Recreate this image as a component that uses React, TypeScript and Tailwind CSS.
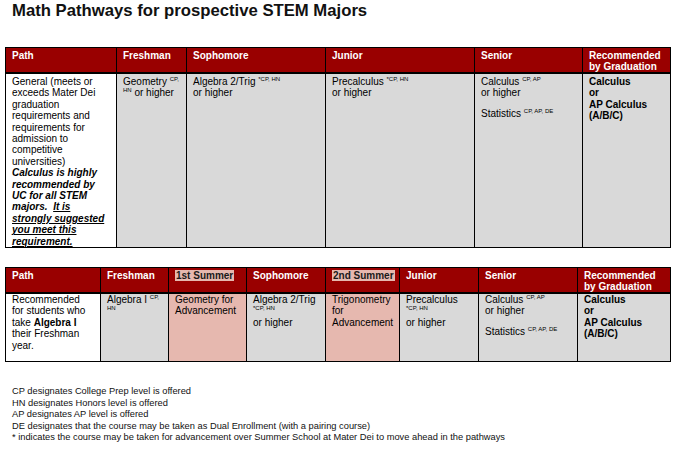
import React from "react";

// Small raised marker for course levels (CP, HN, AP, DE).
function Lv({ children }: { children: React.ReactNode }) {
  return <span className="relative top-[-4px] text-[6px] leading-none">{children}</span>;
}

const head = "bg-[#990000] border-b border-black px-[6px] pt-[2px] text-[10px] leading-[11px] font-bold text-white whitespace-nowrap";
const cell = "px-[6px] text-[10px] leading-[11.4px] text-black whitespace-nowrap";
const gray = "bg-[#d9d9d9]";
const pink = "bg-[#e6b8af]";

function Summer({ children }: { children: React.ReactNode }) {
  return <span className="bg-[#e6b8af] px-px text-[#1a1a1a]">{children}</span>;
}

function Senior() {
  return (
    <>
      <div>
        Calculus <Lv>CP, AP</Lv>
        <br />
        or higher
      </div>
      <div className="mt-[9px]">
        Statistics <Lv>CP, AP, DE</Lv>
      </div>
    </>
  );
}

function Recommended() {
  return (
    <div className="font-bold">
      Calculus
      <br />
      or
      <br />
      AP Calculus
      <br />
      (A/B/C)
    </div>
  );
}

export default function App() {
  return (
    <div
      className="relative h-[449px] w-[677px] overflow-hidden bg-white pl-[5px]"
      style={{ fontFamily: '"Liberation Sans", Arial, sans-serif' }}
    >
      <h1 className="ml-[7px] text-[16.7px] font-bold leading-[22px] text-[#111]">
        Math Pathways for prospective STEM Majors
      </h1>

      {/* Standard pathway */}
      <div className="mt-[25px] grid w-[666px] grid-cols-[110px_69px_138px_148px_107px_87px] grid-rows-[25px_173px] gap-px border border-black bg-black">
        <div className={head}>Path</div>
        <div className={head}>Freshman</div>
        <div className={head}>Sophomore</div>
        <div className={head}>Junior</div>
        <div className={head}>Senior</div>
        <div className={head}>
          Recommended
          <br />
          by Graduation
        </div>

        <div className={`${cell} bg-white pt-[2px]`}>
          General (meets or
          <br />
          exceeds Mater Dei
          <br />
          graduation
          <br />
          requirements and
          <br />
          requirements for
          <br />
          admission to
          <br />
          competitive
          <br />
          universities)
          <br />
          <b className="italic">
            Calculus is highly
            <br />
            recommended by
            <br />
            UC for all STEM
            <br />
            majors.&nbsp; <u>It is</u>
            <br />
            <u>strongly suggested</u>
            <br />
            <u>you meet this</u>
            <br />
            <u>requirement.</u>
          </b>
        </div>
        <div className={`${cell} ${gray} pt-[2px]`}>
          Geometry <Lv>CP,</Lv>
          <br />
          <Lv>HN</Lv> or higher
        </div>
        <div className={`${cell} ${gray} pt-[2px]`}>
          Algebra 2/Trig <Lv>*CP, HN</Lv>
          <br />
          or higher
        </div>
        <div className={`${cell} ${gray} pt-[2px]`}>
          Precalculus <Lv>*CP, HN</Lv>
          <br />
          or higher
        </div>
        <div className={`${cell} ${gray} pt-[2px]`}>
          <Senior />
        </div>
        <div className={`${cell} ${gray} pt-[2px]`}>
          <Recommended />
        </div>
      </div>

      {/* Accelerated pathway with summer courses */}
      <div className="mt-[19px] grid w-[666px] grid-cols-[94px_67px_77px_78px_73px_78px_98px_92px] grid-rows-[25px_67px] gap-px border border-black bg-black">
        <div className={head}>Path</div>
        <div className={head}>Freshman</div>
        <div className={head}>
          <Summer>1st Summer</Summer>
        </div>
        <div className={head}>Sophomore</div>
        <div className={head}>
          <Summer>2nd Summer</Summer>
        </div>
        <div className={head}>Junior</div>
        <div className={head}>Senior</div>
        <div className={head}>
          Recommended
          <br />
          by Graduation
        </div>

        <div className={`${cell} bg-white`}>
          Recommended
          <br />
          for students who
          <br />
          take <b>Algebra I</b>
          <br />
          their Freshman
          <br />
          year.
        </div>
        <div className={`${cell} ${gray}`}>
          Algebra I <Lv>CP,</Lv>
          <br />
          <Lv>HN</Lv>
        </div>
        <div className={`${cell} ${pink}`}>
          Geometry for
          <br />
          Advancement
        </div>
        <div className={`${cell} ${gray}`}>
          Algebra 2/Trig
          <br />
          <Lv>*CP, HN</Lv>
          <br />
          or higher
        </div>
        <div className={`${cell} ${pink}`}>
          Trigonometry
          <br />
          for
          <br />
          Advancement
        </div>
        <div className={`${cell} ${gray}`}>
          Precalculus
          <br />
          <Lv>*CP, HN</Lv>
          <br />
          or higher
        </div>
        <div className={`${cell} ${gray}`}>
          <Senior />
        </div>
        <div className={`${cell} ${gray}`}>
          <Recommended />
        </div>
      </div>

      <div className="ml-[7px] mt-[24px] text-[9.3px] leading-[11.5px] text-[#111]">
        <p>CP designates College Prep level is offered</p>
        <p>HN designates Honors level is offered</p>
        <p>AP designates AP level is offered</p>
        <p>DE designates that the course may be taken as Dual Enrollment (with a pairing course)</p>
        <p>* indicates the course may be taken for advancement over Summer School at Mater Dei to move ahead in the pathways</p>
      </div>
    </div>
  );
}
